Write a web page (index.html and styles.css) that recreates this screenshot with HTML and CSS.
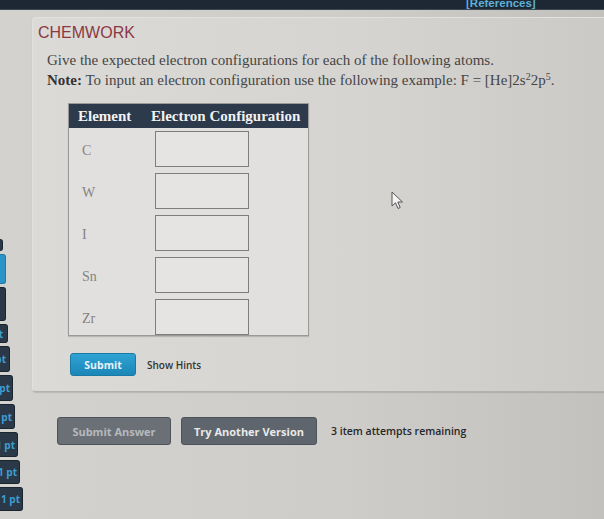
FILE: index.html
```html
<!DOCTYPE html>
<html>
<head>
<meta charset="utf-8">
<link rel="stylesheet" href="styles.css">
</head>
<body>
<div class="topbar"><span class="refs">[References]</span></div>
<div class="main">
  <nav class="sidebar">
    <div class="tab t1"></div>
    <div class="tab t2 active"></div>
    <div class="tab t3"></div>
    <div class="tab t4"><span>1 pt</span></div>
    <div class="tab t5"><span>1 pt</span></div>
    <div class="tab t6"><span>1 pt</span></div>
    <div class="tab t7"><span>1 pt</span></div>
    <div class="tab t8"><span>1 pt</span></div>
    <div class="tab t9"><span>1 pt</span></div>
    <div class="tab t10"><span>1 pt</span></div>
  </nav>
  <div class="content">
    <section class="card">
      <h1 class="title">CHEMWORK</h1>
      <p class="q">Give the expected electron configurations for each of the following atoms.</p>
      <p class="q"><b>Note:</b> To input an electron configuration use the following example: F = [He]2s<sup>2</sup>2p<sup>5</sup>.</p>
      <div class="cfg">
        <div class="cfg-head"><span class="h1">Element</span><span class="h2">Electron Configuration</span></div>
        <div class="cfg-body">
          <div class="row"><span class="el">C</span><span class="box"></span></div>
          <div class="row"><span class="el">W</span><span class="box"></span></div>
          <div class="row"><span class="el">I</span><span class="box"></span></div>
          <div class="row"><span class="el">Sn</span><span class="box"></span></div>
          <div class="row"><span class="el">Zr</span><span class="box"></span></div>
        </div>
      </div>
      <div class="actions">
        <button class="submit">Submit</button>
        <span class="hints">Show Hints</span>
      </div>
    </section>
    <div class="footer-actions">
      <button class="gbtn disabled">Submit Answer</button>
      <button class="gbtn try">Try Another Version</button>
      <span class="attempts">3 item attempts remaining</span>
    </div>
  </div>
</div>
<svg class="cursor" width="14" height="20" viewBox="0 0 14 20"><path d="M1 1 L1 15 L4.5 11.8 L7 17.5 L9.2 16.5 L6.8 11 L11.5 11 Z" fill="#f4f4f4" stroke="#555" stroke-width="1" stroke-linejoin="round"/></svg>
</body>
</html>
```
FILE: styles.css
```css
* { box-sizing: border-box; }
html, body { margin: 0; padding: 0; }
body {
  width: 604px;
  height: 519px;
  overflow: hidden;
  position: relative;
  background: linear-gradient(90deg, #d4d2cf 0%, #cfcdca 55%, #c3c1be 100%);
  font-family: "Liberation Sans", Arial, sans-serif;
}
.topbar {
  height: 10px;
  background: #1d2834;
  overflow: hidden;
  padding-left: 466px;
  border-bottom: 1px solid #3b4650;
}
.refs {
  display: block;
  line-height: 10px;
  margin-top: -2px;
  font-size: 11.5px;
  font-weight: bold;
  color: #5fb0d8;
}
.main {
  display: grid;
  grid-template-columns: 32px 1fr;
}
.sidebar {
  display: flex;
  flex-direction: column;
  align-items: flex-start;
  gap: 3px;
  padding-top: 229px;
}
.tab {
  background: #2b3847;
  border: 1px solid #1b2530;
  border-left: none;
  border-radius: 0 3px 3px 0;
  display: flex;
  justify-content: flex-end;
  align-items: center;
  overflow: hidden;
  color: #3c9fd2;
  font-family: "Open Sans", sans-serif;
  font-weight: bold;
  font-size: 10px;
  white-space: nowrap;
  padding-right: 2px;
}
.tab.active { background: #2a93c8; border-color: #1f7aa8; }
.t1 { width: 3px; height: 12px; }
.t2 { width: 6px; height: 30px; }
.t3 { width: 6px; height: 34px; }
.t4 { width: 8px; height: 19px; padding-right: 4px; }
.t5 { width: 10px; height: 26px; padding-right: 3px; }
.t6 { width: 13px; height: 26px; }
.t7 { width: 15px; height: 25px; }
.t8 { width: 18px; height: 25px; }
.t9 { width: 20px; height: 24px; }
.t10 { width: 23px; height: 24px; }
.content { padding-top: 7px; }
.card {
  margin-right: -20px;
  border: 1px solid #e3e1de;
  border-bottom-color: #b3b1ae;
  border-radius: 4px;
  background: linear-gradient(90deg, #dcdad7 0%, #d6d4d1 55%, #cbc9c6 100%);
  padding: 6px 0 15px 5px;
  box-shadow: 0 1px 1px rgba(0,0,0,0.12);
}
.title {
  margin: 0;
  font-size: 16px;
  line-height: 18px;
  font-weight: normal;
  color: #8c3843;
}
.q {
  margin: 0 0 0 9px;
  font-family: "Liberation Serif", "Times New Roman", serif;
  font-size: 15px;
  line-height: 20px;
  color: #454545;
}
.title + .q { margin-top: 8px; }
.q b { color: #333; }
.q sup { font-size: 10px; line-height: 0; vertical-align: 5px; }
.cfg {
  margin: 13px 0 0 30px;
  width: 241px;
  border: 1px solid #9c9a98;
  background: #e2e0de;
  font-family: "Liberation Serif", "Times New Roman", serif;
  box-shadow: 0 1px 1px rgba(0,0,0,0.15);
}
.cfg-head {
  height: 24px;
  background: #2d3a4b;
  color: #f2f2f2;
  font-weight: bold;
  font-size: 15px;
  display: flex;
  align-items: center;
  padding-left: 9px;
}
.h1 { width: 73px; }
.cfg-body {
  display: flex;
  flex-direction: column;
  gap: 6px;
  padding: 3px 0 0 0;
}
.row {
  display: flex;
  align-items: center;
  height: 36px;
}
.el {
  width: 86px;
  padding-left: 13px;
  padding-top: 3px;
  font-size: 14px;
  color: #858381;
}
.box {
  width: 94px;
  height: 36px;
  border: 1px solid #7f7d7b;
  background: #e6e4e2;
}
.actions {
  display: flex;
  align-items: center;
  gap: 11px;
  margin: 17px 0 0 32px;
}
.submit {
  width: 66px;
  height: 23px;
  border: 1px solid #197aa6;
  border-radius: 3px;
  background: linear-gradient(180deg, #2fa3d4 0%, #1b86b7 100%);
  color: #e8f4fa;
  font-family: "Open Sans", sans-serif;
  font-weight: bold;
  font-size: 10.5px;
  padding: 0;
}
.hints {
  font-family: "Open Sans", sans-serif;
  font-size: 10px;
  color: #333;
  font-weight: 600;
}
.footer-actions {
  display: flex;
  align-items: center;
  margin: 25px 0 0 25px;
}
.gbtn {
  height: 28px;
  border: 1px solid #4e5359;
  border-radius: 3px;
  font-family: "Open Sans", sans-serif;
  font-weight: bold;
  font-size: 11px;
  padding: 0;
}
.disabled {
  width: 114px;
  background: #6b7077;
  color: #b6b9bc;
}
.try {
  width: 136px;
  margin-left: 10px;
  background: #5f656c;
  color: #e9e9e9;
}
.attempts {
  margin-left: 14px;
  font-family: "Open Sans", sans-serif;
  font-size: 10.5px;
  color: #262626;
  font-weight: 600;
}
.cursor {
  position: absolute;
  left: 391px;
  top: 191px;
}
```
